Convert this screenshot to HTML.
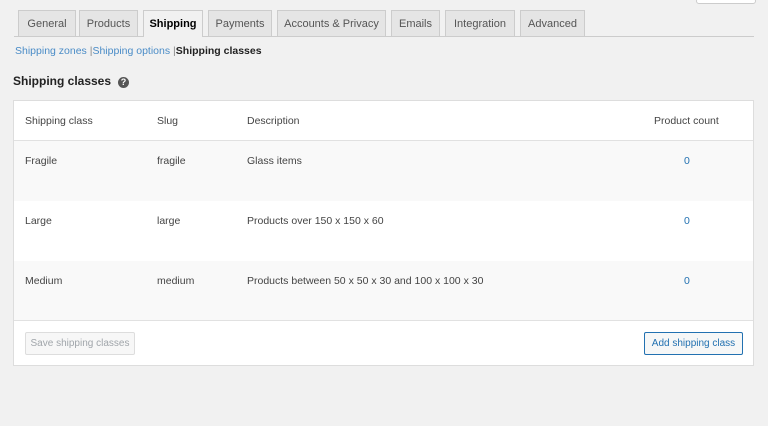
<!DOCTYPE html>
<html><head><style>
body{margin:0;width:768px;height:426px;background:#f1f1f1;font-family:"Liberation Sans",sans-serif;font-size:10.5px;color:#444;position:relative;overflow:hidden}
.a{position:absolute;white-space:nowrap}
.tab{position:absolute;top:10px;height:26px;background:#e5e5e5;border:1px solid #ccc;border-bottom:none;box-sizing:border-box;line-height:27px;text-align:center;color:#555;font-size:11px}
.tab.on{background:#f1f1f1;color:#000;font-weight:bold;height:27px}
a{color:#2271b1;text-decoration:none}
</style></head><body>
<div class="a" style="left:696px;top:-2px;width:58px;height:4px;border:1px solid #ccc;background:#fff;border-radius:3px"></div>
<div class="a" style="left:14px;top:36px;width:740px;height:1px;background:#ccc"></div>
<div class="tab" style="left:18px;width:58px">General</div>
<div class="tab" style="left:79px;width:59px">Products</div>
<div class="tab on" style="left:143px;width:60px">Shipping</div>
<div class="tab" style="left:208px;width:64px">Payments</div>
<div class="tab" style="left:277px;width:109px">Accounts &amp; Privacy</div>
<div class="tab" style="left:391px;width:49px">Emails</div>
<div class="tab" style="left:445px;width:70px">Integration</div>
<div class="tab" style="left:520px;width:65px">Advanced</div>
<div class="a" style="left:15px;top:45px;color:#888;font-size:10.5px"><a style="color:#4a8cc7">Shipping zones</a> |<a style="color:#4a8cc7">Shipping options</a> |<b style="color:#222">Shipping classes</b></div>
<div class="a" style="left:13px;top:74px;font-size:12px;font-weight:bold;color:#222">Shipping classes</div>
<div class="a" style="left:118px;top:77px;width:11px;height:11px;border-radius:50%;background:#555;color:#fff;font-size:9px;font-weight:bold;text-align:center;line-height:11px">?</div>
<div class="a" style="left:13px;top:100px;width:739px;height:264px;background:#fff;border:1px solid #ddd">
<div class="a" style="left:0;top:39px;width:739px;height:1px;background:#e1e1e1"></div>
<div class="a" style="left:0;top:40px;width:739px;height:60px;background:#f9f9f9"></div>
<div class="a" style="left:0;top:160px;width:739px;height:59px;background:#f9f9f9"></div>
<div class="a" style="left:0;top:219px;width:739px;height:1px;background:#e1e1e1"></div>
<div class="a" style="left:11px;top:14px">Shipping class</div><div class="a" style="left:143px;top:14px">Slug</div><div class="a" style="left:233px;top:14px">Description</div><div class="a" style="left:640px;top:14px">Product count</div>
<div class="a" style="left:11px;top:54px">Fragile</div><div class="a" style="left:143px;top:54px">fragile</div><div class="a" style="left:233px;top:54px">Glass items</div><div class="a" style="left:670px;top:54px;color:#2271b1">0</div>
<div class="a" style="left:11px;top:114px">Large</div><div class="a" style="left:143px;top:114px">large</div><div class="a" style="left:233px;top:114px">Products over 150 x 150 x 60</div><div class="a" style="left:670px;top:114px;color:#2271b1">0</div>
<div class="a" style="left:11px;top:174px">Medium</div><div class="a" style="left:143px;top:174px">medium</div><div class="a" style="left:233px;top:174px">Products between 50 x 50 x 30 and 100 x 100 x 30</div><div class="a" style="left:670px;top:174px;color:#2271b1">0</div>
<div class="a" style="left:11px;top:231px;width:108px;height:21px;border:1px solid #ddd;background:#f7f7f7;color:#a0a5aa;font-size:10px;text-align:center;line-height:21px;border-radius:2px">Save shipping classes</div>
<div class="a" style="left:630px;top:231px;width:97px;height:21px;border:1px solid #2271b1;background:#f6f7f7;color:#2271b1;font-size:10px;text-align:center;line-height:21px;border-radius:2px">Add shipping class</div>
</div>
</body></html>
